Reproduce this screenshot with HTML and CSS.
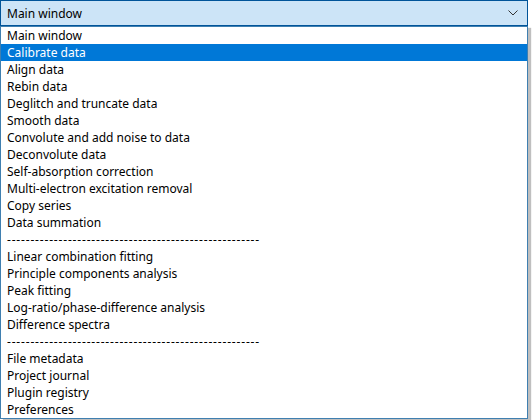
FILE: index.html
```html
<!DOCTYPE html>
<html>
<head>
<meta charset="utf-8">
<link rel="stylesheet" href="styles.css">
</head>
<body>
<div class="combo">
  <span class="combo-text">Main window</span>
  <svg class="chevron" width="10" height="6" viewBox="0 0 10 6"><path d="M0.5 0.5 L5 5 L9.5 0.5" fill="none" stroke="#333" stroke-width="1"/></svg>
</div>
<ul class="list">
  <li>Main window</li>
  <li class="selected">Calibrate data</li>
  <li>Align data</li>
  <li>Rebin data</li>
  <li>Deglitch and truncate data</li>
  <li>Smooth data</li>
  <li>Convolute and add noise to data</li>
  <li>Deconvolute data</li>
  <li>Self-absorption correction</li>
  <li>Multi-electron excitation removal</li>
  <li>Copy series</li>
  <li>Data summation</li>
  <li class="sep">------------------------------------------------------</li>
  <li>Linear combination fitting</li>
  <li>Principle components analysis</li>
  <li>Peak fitting</li>
  <li>Log-ratio/phase-difference analysis</li>
  <li>Difference spectra</li>
  <li class="sep">------------------------------------------------------</li>
  <li>File metadata</li>
  <li>Project journal</li>
  <li>Plugin registry</li>
  <li>Preferences</li>
</ul>
</body>
</html>
```
FILE: styles.css
```css
html, body {
  margin: 0;
  padding: 0;
  background: #ffffff;
}
body {
  width: 532px;
  height: 420px;
  overflow: hidden;
  font-family: "Noto Sans", "Open Sans", sans-serif;
  font-size: 12px;
  color: #000;
}
.combo {
  box-sizing: border-box;
  width: 528px;
  height: 26px;
  border: 1px solid #005499;
  background: #cce4f7;
  display: flex;
  align-items: center;
  justify-content: space-between;
  padding: 0 9px 0 6px;
}
.combo-text {
  line-height: 17px;
}
.list {
  list-style: none;
  margin: 0;
  padding: 0;
  box-sizing: border-box;
  width: 528px;
  border: 1px solid #3f7fb0;
  box-shadow: 3px 2px 1px rgba(0,0,0,0.25);
  background: #fff;
}
.list li {
  height: 17px;
  line-height: 17px;
  padding-left: 6px;
  white-space: nowrap;
}
.list li.sep {
  letter-spacing: 0.82px;
}
.list li.selected {
  background: #0078d7;
  color: #fff;
}
```
